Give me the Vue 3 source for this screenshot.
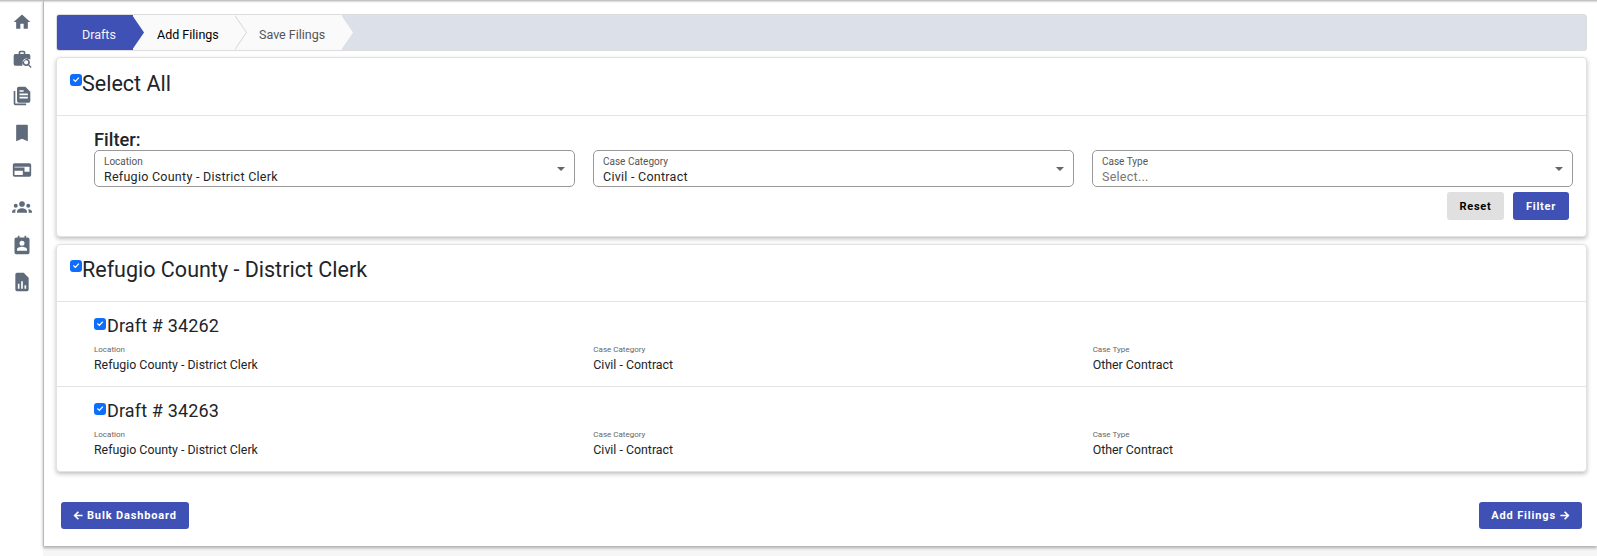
<script setup>
const icons = [
  'M10 20v-6h4v6h5v-8h3L12 3 2 12h3v8z',
  'M10 4h4v2h-4zM8 6V4a2 2 0 0 1 2-2h4a2 2 0 0 1 2 2v2h4a2 2 0 0 1 2 2v4.6A6.5 6.5 0 0 0 12.7 20H4a2 2 0 0 1-2-2V8a2 2 0 0 1 2-2zM17 11.5a4.5 4.5 0 0 1 3.6 7.2l2.9 2.9-1.1 1.1-2.9-2.9A4.5 4.5 0 1 1 17 11.5zm0 2a2.5 2.5 0 1 0 0 5 2.5 2.5 0 0 0 0-5z',
  'M2 6h2v15h13v2H4a2 2 0 0 1-2-2zM8 1h8l6 6v11a2 2 0 0 1-2 2H8a2 2 0 0 1-2-2V3a2 2 0 0 1 2-2zm1 8v2h10V9zm0 4v2h10v-2zm0 -8v2h5V5z',
  'M6 2h12a1 1 0 0 1 1 1v19l-7-3-7 3V3a1 1 0 0 1 1-1z',
  'M3 4h18a2 2 0 0 1 2 2v12a2 2 0 0 1-2 2H3a2 2 0 0 1-2-2V6a2 2 0 0 1 2-2zm0 5v9h10V13H3zm0-1h18V9H3zm12 1v5h6v-5z',
  'M12 5a3.4 3.4 0 1 1 0 6.8A3.4 3.4 0 0 1 12 5zM4.5 8a2.4 2.4 0 1 1 0 4.8 2.4 2.4 0 0 1 0-4.8zm15 0a2.4 2.4 0 1 1 0 4.8 2.4 2.4 0 0 1 0-4.8zM6 19v-1.5c0-2.5 2.7-4 6-4s6 1.5 6 4V19zM0 19v-1.2c0-1.7 1.7-3 4.6-3.2A5 5 0 0 0 4 17v2zm24 0h-4v-2a5 5 0 0 0-.6-2.4c2.9.2 4.6 1.5 4.6 3.2z',
  'M7 1h2v2h6V1h2v2h2a2 2 0 0 1 2 2v16a2 2 0 0 1-2 2H5a2 2 0 0 1-2-2V5a2 2 0 0 1 2-2h2zm5 6a3 3 0 1 0 0 6 3 3 0 0 0 0-6zM6 17v2h12v-2c0-1.8-3.5-3-6-3s-6 1.2-6 3z',
  'M6 1h8l6 6v14a2 2 0 0 1-2 2H6a2 2 0 0 1-2-2V3a2 2 0 0 1 2-2zm1 13v6h2v-6zm4-3v9h2v-9zm4 5v4h2v-4z'
]
const drafts = ['34262', '34263']
const filters = [
  { label: 'Location', value: 'Refugio County - District Clerk' },
  { label: 'Case Category', value: 'Civil - Contract' },
  { label: 'Case Type', value: 'Select...', placeholder: true }
]
</script>

<template>
  <div class="page">
    <aside class="rail">
      <svg v-for="(d, i) in icons" :key="i" class="rail-icon" viewBox="0 0 24 24" fill="#5f6b7a">
        <path :d="d" fill-rule="evenodd" />
      </svg>
    </aside>
    <main class="main">
      <nav class="stepper">
        <div class="step step-1">Drafts</div>
        <div class="step step-2">Add Filings</div>
        <div class="step step-3">Save Filings</div>
      </nav>

      <section class="card">
        <header class="card-head">
          <span class="check"><svg viewBox="0 0 12 12"><path d="M3.4 5.6l2 1.8 3.4-3.8" /></svg></span>
          <h2>Select All</h2>
        </header>
        <div class="filter-body">
          <div class="filter-title">Filter:</div>
          <div class="filter-grid">
            <div v-for="f in filters" :key="f.label" class="select">
              <span class="sel-label">{{ f.label }}</span>
              <span class="sel-value" :class="{ ph: f.placeholder }">{{ f.value }}</span>
              <i class="caret"></i>
            </div>
          </div>
          <div class="filter-actions">
            <button class="btn btn-grey">Reset</button>
            <button class="btn btn-blue">Filter</button>
          </div>
        </div>
      </section>

      <section class="card card-2">
        <header class="card-head">
          <span class="check"><svg viewBox="0 0 12 12"><path d="M3.4 5.6l2 1.8 3.4-3.8" /></svg></span>
          <h2>Refugio County - District Clerk</h2>
        </header>
        <article v-for="d in drafts" :key="d" class="draft">
          <div class="draft-title">
            <span class="check"><svg viewBox="0 0 12 12"><path d="M3.4 5.6l2 1.8 3.4-3.8" /></svg></span>
            <h3>Draft # {{ d }}</h3>
          </div>
          <div class="draft-grid">
            <div><small>Location</small><p>Refugio County - District Clerk</p></div>
            <div><small>Case Category</small><p>Civil - Contract</p></div>
            <div><small>Case Type</small><p>Other Contract</p></div>
          </div>
        </article>
      </section>

      <footer class="actions">
        <button class="btn btn-foot">
          <svg class="arrow" viewBox="0 0 12 12"><path d="M11.5 6H2M6.5 1.5L2 6l4.5 4.5" /></svg>Bulk Dashboard
        </button>
        <button class="btn btn-foot">
          Add Filings<svg class="arrow" viewBox="0 0 12 12"><path d="M.5 6H10M5.5 1.5L10 6l-4.5 4.5" /></svg>
        </button>
      </footer>
    </main>
  </div>
</template>

<style>
html, body { margin: 0; background: #f6f6f6; }
</style>

<style scoped>
* { box-sizing: border-box; }
.page {
  position: relative;
  display: flex;
  width: 1597px;
  height: 556px;
  overflow: hidden;
  background: #f6f6f6;
  font-family: Roboto, "Liberation Sans", sans-serif;
  color: #212529;
}
.page::before {
  content: '';
  position: absolute;
  top: 0;
  left: 0;
  right: 0;
  height: 3px;
  background: linear-gradient(to bottom, #b4b4b4, rgba(200,200,200,.4) 60%, transparent);
  z-index: 5;
}
.rail {
  width: 43px;
  height: 556px;
  flex: none;
  background: #fff;
  display: flex;
  flex-direction: column;
  align-items: center;
  gap: 17.1px;
  padding: 12px 0 0;
}
.rail-icon { width: 20px; height: 20px; flex: none; }
.main {
  flex: 1;
  height: 546px;
  background: #fff;
  border-left: 1px solid #b8b8b8;
  box-shadow: 0 2px 3px rgba(0,0,0,.3);
  padding: 14px 10px 0 12px;
}
.stepper {
  display: flex;
  height: 37px;
  background: #dce0e8;
  border: 1px solid #dddddd;
  border-radius: 3px;
  font-size: 12.5px;
  overflow: hidden;
}
.step {
  position: relative;
  height: 35px;
  line-height: 35px;
  padding: 2px 0 0 24px;
  background: #fafafa;
}
.step-1 { width: 76px; padding-left: 25px; background: #3f51b5; color: #f2f3fb; z-index: 3; }
.step-2 { width: 102px; color: #000; z-index: 2; }
.step-3 { width: 107px; color: #555; z-index: 1; }
.step::after, .step-2::before {
  content: '';
  position: absolute;
  top: 0;
  width: 12px;
  height: 35px;
  clip-path: polygon(0 0, 100% 50%, 0 100%);
}
.step::after { right: -11px; background: inherit; }
.step-2::after { right: -12px; background: #d6d6d6; }
.step-2::before { right: -11px; background: #fafafa; z-index: 1; }
.card {
  margin-top: 6px;
  background: #fff;
  border: 1px solid #e2e2e2;
  border-radius: 4px;
  box-shadow: 0 2px 4px rgba(0,0,0,.25);
}
.card-2 { margin-top: 7px; }
.card-head {
  display: flex;
  height: 58px;
  padding: 13px 0 0 13px;
  border-bottom: 1px solid #e4e4e4;
}
.card-2 .card-head { height: 57px; padding-top: 12px; }
.card-head h2 {
  margin: 0;
  font-size: 21.5px;
  font-weight: 400;
  line-height: 26px;
  color: #212529;
}
.check {
  flex: none;
  display: block;
  width: 12px;
  height: 12px;
  margin-top: 3px;
  border-radius: 3px;
  background: #0d6efd;
}
.check svg { display: block; width: 12px; height: 12px; }
.check path { fill: none; stroke: #fff; stroke-width: 1.3; }
.filter-body { height: 120px; padding: 14px 13px 0 37px; }
.filter-title { font-size: 18.3px; font-weight: 500; line-height: 20px; }
.filter-grid { display: grid; grid-template-columns: repeat(3, 1fr); column-gap: 18px; }
.select {
  position: relative;
  height: 37px;
  border: 1px solid #999;
  border-radius: 5px;
  padding: 5px 9px;
  display: flex;
  flex-direction: column;
}
.sel-label { font-size: 10px; line-height: 11px; color: #555; }
.sel-value { font-size: 12.5px; line-height: 17px; margin-top: 1px; letter-spacing: .26px; }
.sel-value.ph { color: #777; }
.caret {
  position: absolute;
  right: 9px;
  top: 16px;
  border: 4px solid transparent;
  border-top: 4px solid #666;
  border-bottom: 0;
}
.filter-actions { display: flex; justify-content: flex-end; gap: 9px; margin-top: 5px; padding-right: 4px; }
.btn {
  border: 0;
  border-radius: 3px;
  font-family: Roboto, "Liberation Sans", sans-serif;
  font-size: 11px;
  font-weight: 700;
  letter-spacing: .7px;
  height: 28px;
  padding: 0;
}
.btn-grey { width: 57px; background: #e0e0e0; color: #000; }
.btn-blue { width: 56px; background: #3f51b5; color: #fff; }
.draft { height: 85px; border-bottom: 1px solid #e4e4e4; padding: 12px 12px 0 37px; }
.draft:last-child { border-bottom: 0; height: 84px; }
.draft-title { display: flex; height: 24px; }
.draft-title h3 { margin: 0 0 0 1px; font-size: 18px; font-weight: 400; line-height: 24px; letter-spacing: .15px; }
.draft-title .check { margin-top: 4px; }
.draft-grid {
  display: grid;
  grid-template-columns: repeat(3, 1fr);
  column-gap: 18px;
  margin-top: 7px;
}
.draft-grid small { display: block; font-size: 8px; line-height: 10px; color: #666; }
.draft-grid p { margin: 3px 0 0; font-size: 12.36px; line-height: 15px; }
.actions { display: flex; justify-content: space-between; margin-top: 30px; padding: 0 5px; }
.btn-foot {
  height: 27px;
  padding: 0 12px;
  display: inline-flex;
  align-items: center;
  gap: 4px;
  background: #3f51b5;
  color: #fff;
  letter-spacing: .85px;
}
.arrow { width: 10px; height: 11px; }
.arrow path { fill: none; stroke: #fff; stroke-width: 2; }
</style>
